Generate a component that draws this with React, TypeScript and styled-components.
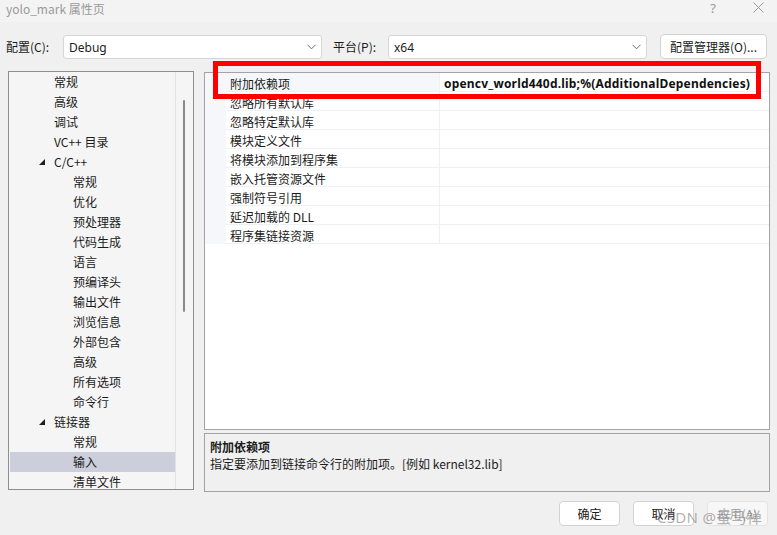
import React from "react";
import styled, { createGlobalStyle } from "styled-components";

const GlobalStyle = createGlobalStyle`
  html, body {
    margin: 0;
    padding: 0;
    background: #f0f0f0;
  }
  body {
    font-family: "Noto Sans CJK SC", "Noto Sans", sans-serif;
    font-size: 12px;
    color: #1b1b1b;
  }
  * { box-sizing: border-box; }
`;

const Window = styled.div`
  position: relative;
  width: 777px;
  height: 535px;
  overflow: hidden;
  background: #f0f0f0;
`;

const TitleBar = styled.div`
  height: 22px;
  display: flex;
  align-items: flex-start;
  justify-content: space-between;
  padding-left: 6px;
  background: #f3f3f3;
`;

const TitleText = styled.span`
  color: #9a9a9a;
  font-size: 12px;
  line-height: 16px;
  padding-top: 1px;
`;

const TitleButtons = styled.div`
  display: flex;
  align-items: flex-start;
  gap: 37px;
  padding: 1px 13px 0 0;
  color: #9a9a9a;
`;

const HelpMark = styled.span`
  font-family: "Noto Sans", sans-serif;
  font-size: 13px;
  line-height: 14px;
`;

const CloseIcon = styled.svg`
  margin-top: 1px;
`;

const ConfigRow = styled.div`
  display: flex;
  align-items: center;
  margin-top: 12px;
  height: 25px;
  padding-left: 6px;
`;

const FieldLabel = styled.span<{ $width: number }>`
  width: ${(p) => p.$width}px;
  flex: none;
  white-space: nowrap;
  line-height: 16px;
`;

const Combo = styled.div<{ $after: number }>`
  width: 259px;
  height: 24px;
  margin-top: 1px;
  margin-right: ${(p) => p.$after}px;
  display: flex;
  align-items: center;
  justify-content: space-between;
  padding: 0 5px 0 5px;
  background: #ffffff;
  border: 1px solid #d6d6d6;
  border-radius: 3px;
`;

const ComboValue = styled.span`
  font-family: "Noto Sans", "Noto Sans CJK SC", sans-serif;
  font-size: 12px;
`;

const PushButton = styled.div<{ $width: number; $disabled?: boolean }>`
  width: ${(p) => p.$width}px;
  height: 25px;
  display: flex;
  align-items: center;
  justify-content: center;
  background: ${(p) => (p.$disabled ? "#f7f7f7" : "#ffffff")};
  color: ${(p) => (p.$disabled ? "#a6a6a6" : "#1b1b1b")};
  border: 1px solid ${(p) => (p.$disabled ? "#e4e4e4" : "#d3d3d3")};
  border-radius: 4px;
  white-space: nowrap;
  font-size: 12px;
`;

const Body = styled.div`
  display: flex;
  align-items: flex-start;
  gap: 10px;
  margin-top: 12px;
  padding-left: 8px;
  height: 421px;
`;

const TreePanel = styled.div`
  width: 186px;
  height: 419px;
  display: flex;
  border: 1px solid #8e8e8e;
  background: #f5f5f5;
  overflow: hidden;
`;

const TreeList = styled.div`
  width: 167px;
  padding-left: 1px;
  border-right: 1px solid #e2e2e2;
`;

const TreeRow = styled.div<{ $depth: number; $selected?: boolean }>`
  position: relative;
  height: 20px;
  line-height: 20px;
  padding-left: ${(p) => (p.$depth === 0 ? 44 : 63)}px;
  background: ${(p) => (p.$selected ? "#cccedb" : "transparent")};
  white-space: nowrap;
`;

const Expander = styled.svg`
  position: absolute;
  left: 29px;
  top: 7px;
`;

const ScrollTrack = styled.div`
  flex: 1;
  padding: 28px 0 0 7px;
`;

const ScrollThumb = styled.div`
  width: 2px;
  height: 212px;
  background: #8a8a8a;
  border-radius: 1px;
`;

const RightColumn = styled.div`
  display: flex;
  flex-direction: column;
  gap: 3px;
  margin-top: 1px;
`;

const GridPanel = styled.div`
  width: 566px;
  height: 358px;
  border: 1px solid #a3a3a3;
  background: #ffffff;
`;

const GridRow = styled.div`
  display: grid;
  grid-template-columns: 21px 214px 1fr;
  height: 19px;
`;

const Gutter = styled.div`
  background: #f5f7fa;
`;

const NameCell = styled.div<{ $active?: boolean }>`
  padding: 2px 0 0 4px;
  line-height: 17px;
  border-bottom: 1px solid #edf0f4;
  border-right: 1px solid #edf0f4;
  background: ${(p) => (p.$active ? "#f5f7fa" : "#ffffff")};
  white-space: nowrap;
  overflow: hidden;
`;

const ValueCell = styled.div`
  padding: 2px 0 0 4px;
  line-height: 17px;
  border-bottom: 1px solid #edf0f4;
  font-family: "Noto Sans", "Noto Sans CJK SC", sans-serif;
  font-weight: 700;
  font-size: 12px;
  letter-spacing: 0.2px;
  white-space: nowrap;
  overflow: hidden;
  color: #111;
`;

const DescBox = styled.div`
  width: 566px;
  height: 59px;
  border: 1px solid #a3a3a3;
  background: #f0f0f0;
  padding: 4px 0 0 5px;
  line-height: 17px;
`;

const DescTitle = styled.div`
  font-weight: 700;
`;

const Footer = styled.div`
  display: flex;
  justify-content: flex-end;
  gap: 13px;
  margin-top: 9px;
  padding-right: 9px;
`;

const Highlight = styled.div`
  position: absolute;
  left: 213px;
  top: 61px;
  width: 548px;
  height: 38px;
  border: 5px solid #ff0000;
  pointer-events: none;
`;

const Watermark = styled.div`
  position: absolute;
  left: 657px;
  top: 507px;
  font-family: "Noto Sans", "Noto Sans CJK SC", sans-serif;
  font-size: 15px;
  line-height: 20px;
  letter-spacing: 0.3px;
  color: rgba(110, 110, 110, 0.55);
  white-space: nowrap;
  pointer-events: none;
`;

type TreeItem = { label: string; depth: number; open?: boolean; selected?: boolean };

const treeItems: TreeItem[] = [
  { label: "常规", depth: 0 },
  { label: "高级", depth: 0 },
  { label: "调试", depth: 0 },
  { label: "VC++ 目录", depth: 0 },
  { label: "C/C++", depth: 0, open: true },
  { label: "常规", depth: 1 },
  { label: "优化", depth: 1 },
  { label: "预处理器", depth: 1 },
  { label: "代码生成", depth: 1 },
  { label: "语言", depth: 1 },
  { label: "预编译头", depth: 1 },
  { label: "输出文件", depth: 1 },
  { label: "浏览信息", depth: 1 },
  { label: "外部包含", depth: 1 },
  { label: "高级", depth: 1 },
  { label: "所有选项", depth: 1 },
  { label: "命令行", depth: 1 },
  { label: "链接器", depth: 0, open: true },
  { label: "常规", depth: 1 },
  { label: "输入", depth: 1, selected: true },
  { label: "清单文件", depth: 1 },
];

const properties: { name: string; value?: string }[] = [
  { name: "附加依赖项", value: "opencv_world440d.lib;%(AdditionalDependencies)" },
  { name: "忽略所有默认库" },
  { name: "忽略特定默认库" },
  { name: "模块定义文件" },
  { name: "将模块添加到程序集" },
  { name: "嵌入托管资源文件" },
  { name: "强制符号引用" },
  { name: "延迟加载的 DLL" },
  { name: "程序集链接资源" },
];

const Chevron = () => (
  <svg width="9" height="6" viewBox="0 0 9 6">
    <path d="M0.5 0.8 L4.5 4.8 L8.5 0.8" fill="none" stroke="#6d6d6d" strokeWidth="1" />
  </svg>
);

const CloseGlyph = () => (
  <CloseIcon width="11" height="11" viewBox="0 0 11 11">
    <path d="M0.5 0.5 L10.5 10.5 M10.5 0.5 L0.5 10.5" stroke="#9a9a9a" strokeWidth="1" />
  </CloseIcon>
);

export default function App() {
  return (
    <>
      <GlobalStyle />
      <Window>
        <TitleBar>
          <TitleText>yolo_mark 属性页</TitleText>
          <TitleButtons>
            <HelpMark>?</HelpMark>
            <CloseGlyph />
          </TitleButtons>
        </TitleBar>

        <ConfigRow>
          <FieldLabel $width={57}>配置(C):</FieldLabel>
          <Combo $after={11}>
            <ComboValue>Debug</ComboValue>
            <Chevron />
          </Combo>
          <FieldLabel $width={55}>平台(P):</FieldLabel>
          <Combo $after={13}>
            <ComboValue>x64</ComboValue>
            <Chevron />
          </Combo>
          <PushButton $width={107}>配置管理器(O)...</PushButton>
        </ConfigRow>

        <Body>
          <TreePanel>
            <TreeList>
              {treeItems.map((item, i) => (
                <TreeRow key={i} $depth={item.depth} $selected={item.selected}>
                  {item.open && (
                    <Expander width="6" height="6" viewBox="0 0 6 6">
                      <polygon points="6,0 6,6 0,6" fill="#1e1e1e" />
                    </Expander>
                  )}
                  {item.label}
                </TreeRow>
              ))}
            </TreeList>
            <ScrollTrack>
              <ScrollThumb />
            </ScrollTrack>
          </TreePanel>

          <RightColumn>
            <GridPanel>
              {properties.map((p, i) => (
                <GridRow key={i}>
                  <Gutter />
                  <NameCell $active={i === 0}>{p.name}</NameCell>
                  <ValueCell>{p.value ?? ""}</ValueCell>
                </GridRow>
              ))}
            </GridPanel>
            <DescBox>
              <DescTitle>附加依赖项</DescTitle>
              <div>指定要添加到链接命令行的附加项。[例如 kernel32.lib]</div>
            </DescBox>
          </RightColumn>
        </Body>

        <Footer>
          <PushButton $width={61}>确定</PushButton>
          <PushButton $width={61}>取消</PushButton>
          <PushButton $width={61} $disabled>
            应用(A)
          </PushButton>
        </Footer>

        <Highlight />
        <Watermark>CSDN @蚕马禅</Watermark>
      </Window>
    </>
  );
}
